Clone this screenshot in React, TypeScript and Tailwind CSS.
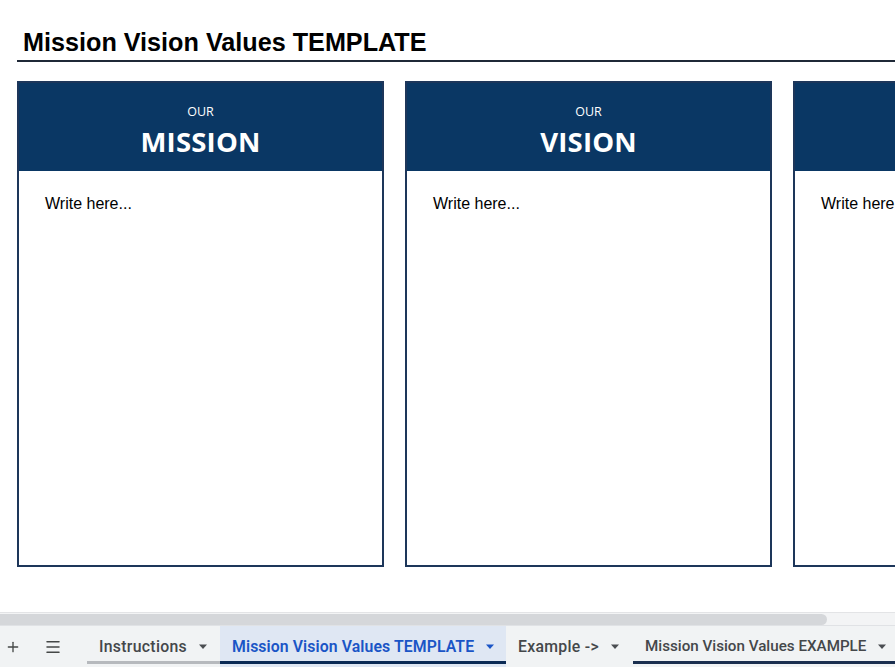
import { Plus, Menu } from "lucide-react";

const cards = [
  { small: "OUR", big: "MISSION" },
  { small: "OUR", big: "VISION" },
  { small: "OUR", big: "VALUES" },
];

const tabs = [
  { label: "Instructions", active: false, bar: "bg-[#b6b9bd]", w: "w-[133px]", tr: "tracking-[0.3px] text-[15.8px]" },
  { label: "Mission Vision Values TEMPLATE", active: true, bar: "bg-[#0b2a55]", w: "w-[286px]", tr: "tracking-[0.1px] text-[15.8px]" },
  { label: "Example ->", active: false, bar: "bg-transparent", w: "w-[127px]", tr: "tracking-[0.3px] text-[15.8px]" },
  { label: "Mission Vision Values EXAMPLE", active: false, bar: "bg-[#1b2f4f]", w: "w-[275px]", tr: "tracking-[0px] text-[15.2px]" },
];

function Caret({ blue }: { blue?: boolean }) {
  return (
    <svg width="10" height="6" viewBox="0 0 10 6" className="shrink-0" aria-hidden>
      <path d="M1 0.5h8L5 5z" fill={blue ? "#1a55c6" : "#4a4d51"} />
    </svg>
  );
}

export default function App() {
  return (
    <div className="flex h-[667px] w-[895px] flex-col overflow-hidden bg-white font-['Liberation_Sans',Arial,sans-serif]">
      <div className="flex-1 overflow-hidden">
        <div className="ml-[17px] border-b-2 border-[#1f2937] pl-[6px] pt-[28px] pb-[4px]">
          <h1 className="text-[25.2px] font-bold leading-[28px] text-black">Mission Vision Values TEMPLATE</h1>
        </div>
        <div className="mt-[19px] flex gap-[21px] pl-[17px]">
          {cards.map((c) => (
            <div key={c.big} className="flex h-[486px] w-[367px] shrink-0 flex-col border-2 border-[#1d365a] bg-white">
              <div className="flex h-[88px] shrink-0 flex-col items-center justify-start bg-[#0a3764] pt-[21px] font-['Open_Sans',sans-serif] text-white">
                <span className="text-[12.5px] font-medium leading-[16px]">{c.small}</span>
                <span className="mt-[5px] text-[27.5px] font-bold leading-[34px] tracking-[0.2px]">{c.big}</span>
              </div>
              <div className="px-[26px] pt-[23px] text-[16px] leading-[20px] text-black">Write here...</div>
            </div>
          ))}
        </div>
      </div>

      <div className="flex h-[13px] items-center border-t border-[#e3e4e6] bg-[#f3f4f5]">
        <div className="h-[11px] w-[827px] rounded-r-full bg-[#d5d7da]" />
      </div>

      <div className="flex h-[42px] items-stretch border-t border-[#e0e2e5] bg-[#f1f3f4] font-[Roboto,'Liberation_Sans',sans-serif]">
        <div className="flex w-[25px] shrink-0 items-center justify-center text-[#444746]">
          <Plus size={16} strokeWidth={2} />
        </div>
        <div className="flex w-[56px] shrink-0 items-center justify-center text-[#444746]">
          <Menu size={18} strokeWidth={2} />
        </div>
        <div className="w-[6px] shrink-0" />
        {tabs.map((t) => (
          <div
            key={t.label}
            className={`relative flex ${t.w} shrink-0 items-center gap-[11px] pl-[12px] ${t.active ? "bg-[#dfe7f3] font-semibold text-[#1a55c6]" : "font-medium text-[#44474a]"}`}
          >
            <span className={`whitespace-nowrap ${t.tr}`}>{t.label}</span>
            <Caret blue={t.active} />
            <div className={`absolute bottom-[3px] left-0 right-0 h-[3px] ${t.bar}`} />
          </div>
        ))}
      </div>
    </div>
  );
}
